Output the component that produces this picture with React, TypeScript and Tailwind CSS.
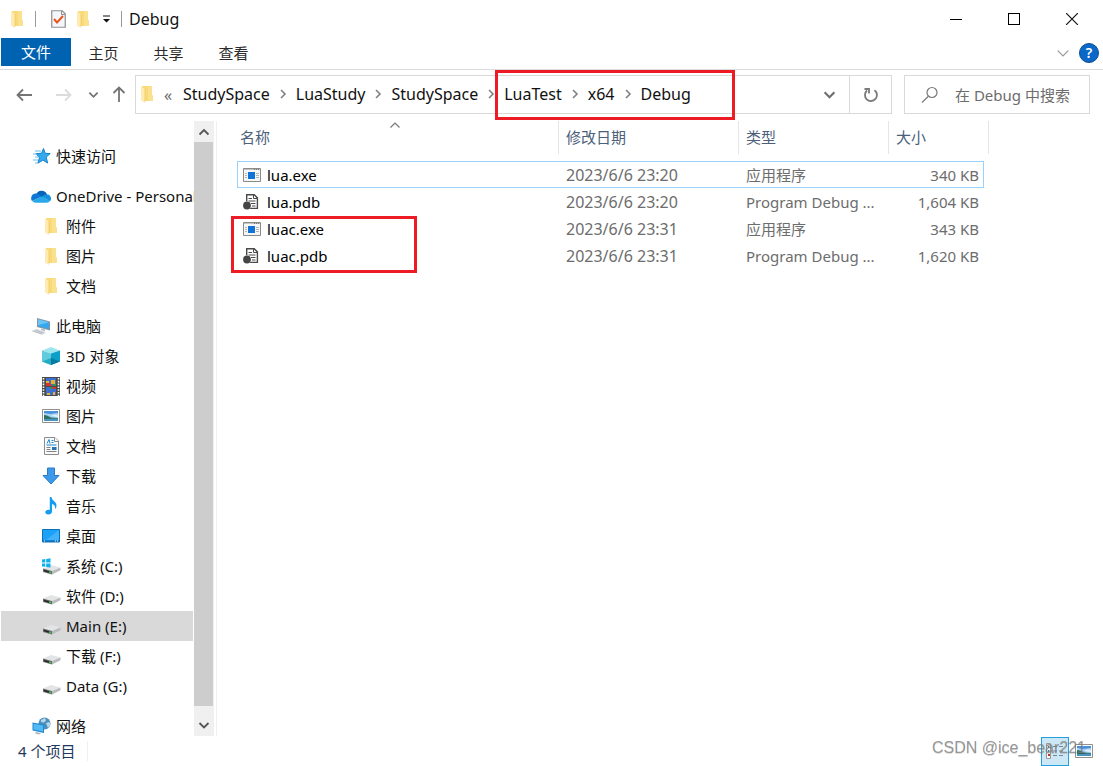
import { ReactNode } from 'react';

type NavItem = { label: string; icon: ReactNode; active?: boolean };

type FileRow = { name: string; kind: 'exe' | 'pdb'; date: string; type: string; size: string; focused?: boolean };

function FolderIcon() {
  return (
    <svg className="w-[13px] h-[17px] shrink-0" viewBox="0 0 13 17">
      <path d="M1 0h10v9.500h1V15H3z" fill="#f9d978" />
      <path d="M7 0h4v9.500h1V15H7z" fill="#fbe08e" />
      <path d="M0 .5l4 2.500v14L0 14.500z" fill="#fdebb2" />
      <path d="M4 3v12.500" stroke="#efc866" strokeWidth=".8" />
    </svg>
  );
}

function CheckDocIcon() {
  return (
    <svg className="w-[15px] h-[18px] shrink-0" viewBox="0 0 15 18">
      <path d="M.75.75h10.5l3 3v13.5H.75z" fill="#f4f6fa" stroke="#8e8e8e" strokeWidth="1.200" />
      <path d="M10.5 1v3.5H14" fill="none" stroke="#8e8e8e" />
      <path d="M3 9l3 3.500 6-6.500" fill="none" stroke="#e8541c" strokeWidth="2" />
    </svg>
  );
}

function StarIcon() {
  return (
    <svg className="w-[19px] h-[18px]" viewBox="0 0 19 18">
      <path d="M11.500 1.500l1.700 4.800 5 .3-4 3.500 1.400 5.900-4.700-2.900-4.900 3 1.500-5.700L4 6.600l5.500-.3z" fill="#35a9ee" stroke="#1681c9" />
      <path d="M3 4h6M1 7h4M3 10h4M1 13h5M3 16h3" stroke="#65bdf2" />
    </svg>
  );
}

function CloudIcon() {
  return (
    <svg className="w-5 h-[14px]" viewBox="0 0 20 14">
      <path d="M5 6a5.800 5.800 0 0 1 11-.5l-5 4z" fill="#0364b8" />
      <path d="M4.500 4.500A4.800 4.800 0 0 0 1 12l10-4.500-3.500-2.300a5 5 0 0 0-3-.7z" fill="#0f78d4" />
      <path d="M15.500 5.200a4.300 4.300 0 0 1 3.500 7L10.500 7.600l2.500-1.700z" fill="#1490df" />
      <path d="M1.200 12.100l9.500-4.700 8.300 4.700a4 4 0 0 1-3.300 1.700H4.600a4.500 4.500 0 0 1-3.400-1.700z" fill="#28a8ea" />
    </svg>
  );
}

function PcIcon() {
  return (
    <svg className="w-5 h-[18px]" viewBox="0 0 20 18">
      <path d="M6 1l13 3.500v9L6 10z" fill="#8a949c" />
      <path d="M7 2.300l11 3v7L7 9z" fill="#35a7ef" />
      <path d="M7 2.300l11 3-11 3z" fill="#6bc4f7" />
      <path d="M10 11.500l4 1v2l-4-1.500z" fill="#b4bcc2" />
      <path d="M0 14l6-2 9 3.500-4 2.200z" fill="#d5d8dc" />
      <path d="M2 14.200l9 2.700M4.500 13l8 2.900" stroke="#a5abb0" strokeWidth=".6" />
    </svg>
  );
}

function CubeIcon() {
  return (
    <svg className="w-[18px] h-[18px]" viewBox="0 0 18 18">
      <path d="M9 0l9 3.500-9 3-9-3z" fill="#9ee6ef" />
      <path d="M0 3.500l9 3V18l-9-3.500z" fill="#61cbdc" />
      <path d="M18 3.500l-9 3V18l9-3.500z" fill="#0c9fc8" />
      <path d="M0 14.500L9 11v7z" fill="#22adc5" />
      <path d="M18 14.500L9 11v7z" fill="#067a9f" />
    </svg>
  );
}

function FilmIcon() {
  return (
    <svg className="w-[18px] h-[19px]" viewBox="0 0 18 19">
      <path d="M0 0h18v19H0z" fill="#4a4a4a" />
      <path d="M1.500 1v18M16.500 1v18" stroke="#fff" strokeWidth="1.600" strokeDasharray="1.600 1.200" />
      <path d="M4 1h10v8H4zM4 10h10v8H4z" fill="#3c6fd0" />
      <path d="M4 6h4l2 3H4zM10 10h4v2h-3z" fill="#d8322b" />
      <path d="M9 3h4v4H9zM4 4h3v2H4zM5 16h3v2H5zM11 15h2v3h-2z" fill="#e8b425" />
      <path d="M11 7h3v2h-3zM8 10h2v2H8z" fill="#389b44" />
    </svg>
  );
}

function PictureIcon() {
  return (
    <svg className="w-[18px] h-[14px]" viewBox="0 0 18 14">
      <path d="M.5.5h17v13H.5z" fill="#fff" stroke="#909090" />
      <path d="M2 2h14v10H2z" fill="#a9d3f4" />
      <path d="M2 2h14v2L8 5 2 4z" fill="#4a91dd" />
      <path d="M2 6l3 .5L9 8.500l7 .5v1H2z" fill="#2f6f60" />
      <path d="M2 10l14-.5V12H2z" fill="#4a93bd" />
      <path d="M9 7l4-1.500 3 1v1.500z" fill="#e4f2fb" />
    </svg>
  );
}

function DocIcon() {
  return (
    <svg className="w-[15px] h-[18px]" viewBox="0 0 15 18">
      <path d="M.5.5h10.500l3.500 3.500v13.500H.5z" fill="#fafafa" stroke="#8c8c8c" />
      <path d="M10.500.5V4.500h4" fill="#fff" stroke="#8c8c8c" />
      <path d="M3 6.500l2-4 1 4M7.500 3.500h2M7.500 5.500h2M2.500 8h10" fill="none" stroke="#1d8ad6" />
      <path d="M2.500 10.500h4M2.500 12.500h4M2.500 14.500h10" stroke="#858585" />
      <path d="M8 10h4.500v3H8z" fill="#2373b8" />
    </svg>
  );
}

function DownIcon() {
  return (
    <svg className="w-[18px] h-[18px]" viewBox="0 0 18 18">
      <path d="M5.500 1h7v7.500H17L9 17 1 8.500h4.500z" fill="#3d9aea" stroke="#2a7bc8" />
    </svg>
  );
}

function MusicIcon() {
  return (
    <svg className="w-[18px] h-[18px]" viewBox="0 0 18 18">
      <path d="M9.500 0c.5 4 5 4.500 5 8.500 0 1.800-.8 3-1.500 3.500.5-3-.8-4.500-3-5v7.500c0 2-1.500 3-3.700 3-2 0-3-1-3-2.200 0-1.800 2-2.800 4.500-2.300V0z" fill="#129cf2" />
    </svg>
  );
}

function DesktopIcon() {
  return (
    <svg className="w-[18px] h-[14px]" viewBox="0 0 18 14">
      <path d="M.5.5h17v12.500H.5z" fill="#1ba1f9" stroke="#0c6fb8" />
      <path d="M17 1v10H4z" fill="#3fb2fb" />
      <path d="M1 12h16" stroke="#0f5ea0" />
      <path d="M2 12h1M13 12h1M15 12h1" stroke="#fff" />
    </svg>
  );
}

function DriveIcon({ windows }: { windows?: boolean }) {
  return (
    <svg className="w-[19px] h-[18px]" viewBox="0 0 19 18">
      <path d="M1 11.500L9 8l9.500 2.500L10 14z" fill="#e3e4e5" />
      <path d="M18.500 10.500v2.800L10 17.500V14z" fill="#b9bbbd" />
      <path d="M1 11.500l9 2.500v3.500L1 15z" fill="#6a6d6f" />
      <path d="M2 12.800l5 1.400v1.500l-5-1.400z" fill="#242628" />
      <path d="M7.300 14.500l1.700.5v1.500l-1.700-.5z" fill="#2fd43a" />
      {windows && <path d="M0 2.500l3.300-.5v3.500H0zM4.200 1.900L8.500 1.300v4.200H4.200zM0 6.400h3.300v3.400L0 9.400zM4.200 6.400h4.300v4.200l-4.300-.6z" fill="#12b0ec" />}
    </svg>
  );
}

function NetworkIcon() {
  return (
    <svg className="w-[19px] h-[18px]" viewBox="0 0 19 18">
      <circle cx="12.500" cy="6.500" r="6" fill="#4b8fbc" />
      <path d="M9 3l4-2 1 2.500-2 2-3-.5zM14 6l3.500-1 .8 3-2.300 3z" fill="#b7d9ea" />
      <path d="M.5 5.500l11.500 2v8.500L.5 13.500z" fill="#2787cf" />
      <path d="M1.500 6.800L11 8.400v6.200l-9.500-2z" fill="#4fbaf5" />
      <path d="M4 15l5 1.200L7 17.500l-4-1z" fill="#a9b4bb" />
    </svg>
  );
}

function ExeIcon() {
  return (
    <svg className="w-[18px] h-[14px] shrink-0" viewBox="0 0 18 14">
      <path d="M.5.5h17v13H.5z" fill="#f6f6f6" stroke="#8a8a8a" />
      <path d="M1 1.500h16" stroke="#c3c3c3" />
      <path d="M11 1.500h1M13 1.500h1M15 1.500h1" stroke="#777" />
      <path d="M5 4h7v7H5z" fill="#0f73d8" />
      <path d="M2 5.500h2M2 7.500h2M2 9.500h2M13 5.500h3M13 7.500h3M13 9.500h3" stroke="#b4b4b4" />
    </svg>
  );
}

function PdbIcon() {
  return (
    <svg className="w-[18px] h-[18px] shrink-0" viewBox="0 0 18 18">
      <path d="M3.700 1.700h7.500l3.200 3.200v10.500H3.700z" fill="#fff" stroke="#4a4a4a" strokeWidth="1.400" />
      <path d="M10.500 2v3.500H14" fill="none" stroke="#4a4a4a" />
      <path d="M5.500 5.500h3.500M5.500 8h7M8 10.500h4.500M9 13h3.500" stroke="#4a4a4a" />
      <circle cx="4" cy="12.500" r="4.300" fill="#fff" />
      <circle cx="4" cy="12.500" r="3.900" fill="#454545" />
    </svg>
  );
}

function Chevron({ className, d, size = 12, width = 1.5 }: { className?: string; d: string; size?: number; width?: number }) {
  return (
    <svg className={className} width={size} height={size} viewBox="0 0 12 12" fill="none" stroke="currentColor" strokeWidth={width}>
      <path d={d} />
    </svg>
  );
}

const DOWN = 'M1.500 4l4.500 4.500L10.500 4';
const UP = 'M1.500 8.500L6 4l4.500 4.500';
const RIGHT = 'M4 2L8 6l-4 4';

const CRUMBS = ['StudySpace', 'LuaStudy', 'StudySpace', 'LuaTest', 'x64', 'Debug'];

const GROUPS: { root: NavItem; children: NavItem[] }[] = [
  { root: { label: '快速访问', icon: <StarIcon /> }, children: [] },
  {
    root: { label: 'OneDrive - Personal', icon: <CloudIcon /> },
    children: [
      { label: '附件', icon: <FolderIcon /> },
      { label: '图片', icon: <FolderIcon /> },
      { label: '文档', icon: <FolderIcon /> },
    ],
  },
  {
    root: { label: '此电脑', icon: <PcIcon /> },
    children: [
      { label: '3D 对象', icon: <CubeIcon /> },
      { label: '视频', icon: <FilmIcon /> },
      { label: '图片', icon: <PictureIcon /> },
      { label: '文档', icon: <DocIcon /> },
      { label: '下载', icon: <DownIcon /> },
      { label: '音乐', icon: <MusicIcon /> },
      { label: '桌面', icon: <DesktopIcon /> },
      { label: '系统 (C:)', icon: <DriveIcon windows /> },
      { label: '软件 (D:)', icon: <DriveIcon /> },
      { label: 'Main (E:)', icon: <DriveIcon />, active: true },
      { label: '下载 (F:)', icon: <DriveIcon /> },
      { label: 'Data (G:)', icon: <DriveIcon /> },
    ],
  },
  { root: { label: '网络', icon: <NetworkIcon /> }, children: [] },
];

const FILES: FileRow[] = [
  { name: 'lua.exe', kind: 'exe', date: '2023/6/6 23:20', type: '应用程序', size: '340 KB', focused: true },
  { name: 'lua.pdb', kind: 'pdb', date: '2023/6/6 23:20', type: 'Program Debug ...', size: '1,604 KB' },
  { name: 'luac.exe', kind: 'exe', date: '2023/6/6 23:31', type: '应用程序', size: '343 KB' },
  { name: 'luac.pdb', kind: 'pdb', date: '2023/6/6 23:31', type: 'Program Debug ...', size: '1,620 KB' },
];

const COLUMNS = ['名称', '修改日期', '类型', '大小'];

function TitleBar() {
  return (
    <header className="flex h-[38px] shrink-0 items-center pl-[11px] pr-[2px]">
      <FolderIcon />
      <span className="ml-[11px] h-4 w-px bg-[#9a9a9a]" />
      <button aria-label="属性" className="ml-[15px]"><CheckDocIcon /></button>
      <button aria-label="新建文件夹" className="ml-[11px]"><FolderIcon /></button>
      <button aria-label="自定义快速访问工具栏" className="ml-3">
        <svg className="w-[9px] h-2" viewBox="0 0 9 8"><path d="M1 .5h7v1H1zM1 4h7L4.500 7.500z" fill="#111" /></svg>
      </button>
      <span className="ml-[10px] h-4 w-px bg-[#9a9a9a]" />
      <h1 className="ml-[7px] flex-1 text-base">Debug</h1>
      <button aria-label="最小化" className="flex h-full w-[58px] items-center justify-center"><span className="h-px w-3 bg-black" /></button>
      <button aria-label="最大化" className="flex h-full w-[58px] items-center justify-center"><span className="h-3 w-3 border border-black" /></button>
      <button aria-label="关闭" className="flex h-full w-[58px] items-center justify-center">
        <Chevron d="M0 0l12 12M12 0L0 12" width={1.2} />
      </button>
    </header>
  );
}

function Ribbon() {
  return (
    <nav className="flex h-8 shrink-0 border-b border-[#dadbdc] pl-px pr-1 text-[#2b2b2b]">
      <button className="h-7 w-[70px] bg-[#0063b1] text-white">文件</button>
      {['主页', '共享', '查看'].map((tab) => (
        <button key={tab} className="h-[30px] w-[65px]">{tab}</button>
      ))}
      <button aria-label="展开功能区" className="ml-auto mr-[9px] h-[30px] text-[#9b9b9b]"><Chevron d={DOWN} size={14} width={1.1} /></button>
      <button aria-label="帮助" className="mt-[5px] flex h-5 w-5 items-center justify-center rounded-full border border-[#0a4f94] bg-[#0b68c8] text-sm font-semibold text-white">?</button>
    </nav>
  );
}

function AddressBar() {
  return (
    <div className="flex h-[51px] shrink-0 items-start pr-[13px] pt-[5px]">
      <div className="flex h-[39px] w-[135px] shrink-0 items-center pl-4 text-[#747474]">
        <button aria-label="后退">
          <svg className="w-[17px] h-[14px]" viewBox="0 0 17 14" fill="none" stroke="currentColor" strokeWidth="1.800"><path d="M7 1.500L1.500 7 7 12.500M1.500 7H16" /></svg>
        </button>
        <button aria-label="前进" className="ml-[22px] text-[#dcdcdc]">
          <svg className="w-[17px] h-[14px]" viewBox="0 0 17 14" fill="none" stroke="currentColor" strokeWidth="1.800"><path d="M10 1.500L15.500 7 10 12.500M15.500 7H1" /></svg>
        </button>
        <button aria-label="最近位置" className="ml-4"><Chevron d={DOWN} size={11} width={2} /></button>
        <button aria-label="上移" className="ml-[13px]">
          <svg className="w-[14px] h-[17px]" viewBox="0 0 14 17" fill="none" stroke="currentColor" strokeWidth="1.800"><path d="M1.500 7L7 1.500 12.500 7M7 1.500V16" /></svg>
        </button>
      </div>
      <div className="relative flex h-[39px] min-w-0 flex-1 items-center border border-[#d9d9d9] pl-[5px]">
        <FolderIcon />
        <span className="ml-[10px] w-[19px] text-base leading-5 text-[#6a6a6a]">«</span>
        {CRUMBS.map((crumb, i) => (
          <div key={i} className="flex items-center pb-0.5">
            {i > 0 && <Chevron className="mx-[7px] text-[#808080]" d={RIGHT} width={1.600} />}
            <button className="text-base leading-5">{crumb}</button>
          </div>
        ))}
        <button aria-label="以前的位置" className="ml-auto mr-[13px] text-[#6f6f6f]"><Chevron d={DOWN} size={13} width={2} /></button>
        <button aria-label="刷新" className="flex h-full w-[42px] items-center justify-center border-l border-[#d9d9d9] text-[#7a7a7a]">
          <svg className="w-4 h-4" viewBox="0 0 16 16" fill="none" stroke="currentColor" strokeWidth="1.800"><path d="M11.500 3.200A6 6 0 1 1 4 3.500M1.500 2h4.500v4.500" /></svg>
        </button>
        <span className="absolute left-[359px] -top-[6px] h-[50px] w-[240px] border-3 border-[#ed1c24]" />
      </div>
      <label className="ml-3 flex h-[39px] w-[186px] shrink-0 items-center border border-[#d9d9d9] pl-4 text-[#6d6d6d]">
        <svg className="w-[18px] h-[18px] shrink-0" viewBox="0 0 18 18" fill="none" stroke="#7a7a7a" strokeWidth="1.200"><circle cx="11" cy="6.500" r="5" /><path d="M7.400 10.200L1 16.500" /></svg>
        <input type="search" aria-label="搜索" placeholder="在 Debug 中搜索" className="ml-4 w-full min-w-0 outline-none placeholder:text-[#6d6d6d]" />
      </label>
    </div>
  );
}

function NavRow({ item, child }: { item: NavItem; child?: boolean }) {
  return (
    <button className={`flex h-[30px] w-full items-center whitespace-nowrap text-left ${child ? 'pl-10' : 'pl-[30px]'} ${item.active ? 'bg-[#d9d9d9]' : ''}`}>
      <span className="flex w-[20px] shrink-0 justify-center">{item.icon}</span>
      <span className="ml-[5px]">{item.label}</span>
    </button>
  );
}

function Sidebar() {
  return (
    <aside className="flex w-[217px] shrink-0 border-r border-[#f0f0f0] pl-px">
      <div className="w-[193px] overflow-hidden pr-px pt-5">
        {GROUPS.map(({ root, children }) => (
          <div key={root.label} className="mb-[10px] last:mb-0">
            <NavRow item={root} />
            {children.map((item) => <NavRow key={item.label} item={item} child />)}
          </div>
        ))}
      </div>
      <div className="flex w-5 flex-col bg-[#f0f0f0] text-[#555]">
        <button aria-label="向上滚动" className="flex h-[21px] items-center justify-center"><Chevron d={UP} width={1.800} /></button>
        <div className="mr-px flex-1 bg-[#cdcdcd]" />
        <button aria-label="向下滚动" className="flex h-[30px] items-center justify-center pt-2"><Chevron d={DOWN} width={1.800} /></button>
      </div>
    </aside>
  );
}

function FileTable() {
  return (
    <main className="relative min-w-0 flex-1 pl-5">
      <Chevron className="absolute left-[172px] -top-[2px] text-[#777]" d={UP} width={1.200} />
      <table className="w-[752px] table-fixed border-separate border-spacing-0">
        <colgroup>
          <col className="w-[322px]" />
          <col className="w-[180px]" />
          <col className="w-[150px]" />
          <col className="w-[95px]" />
          <col className="w-[5px]" />
        </colgroup>
        <thead>
          <tr>
            {COLUMNS.map((col, i) => (
              <th key={col} colSpan={i === 3 ? 2 : 1} className="h-10 p-0 align-top text-left font-normal text-[#4c607a]">
                <div className={`flex h-[33px] items-center border-r border-[#e5e5e5] pb-0.5 ${i === 0 ? 'pl-[3px]' : 'pl-[7px]'}`}>{col}</div>
              </th>
            ))}
          </tr>
        </thead>
        <tbody>
          {FILES.map((f) => {
            const line = f.focused ? 'border-[#99d1ff]' : 'border-transparent';
            return (
              <tr key={f.name} className="h-[27px] text-[#6d6d6d]">
                <td className={`border-y border-l p-0 pl-[5px] ${line}`}>
                  <div className="flex h-[25px] items-center text-black">
                    <span className="w-6">{f.kind === 'exe' ? <ExeIcon /> : <PdbIcon />}</span>
                    {f.name}
                  </div>
                </td>
                <td className={`border-y p-0 pl-[7px] text-base leading-5 ${line}`}>{f.date}</td>
                <td className={`border-y p-0 pl-[7px] whitespace-nowrap ${line}`}>{f.type}</td>
                <td className={`border-y border-r p-0 pr-1 text-right whitespace-nowrap ${line}`}>{f.size}</td>
                <td className="p-0" />
              </tr>
            );
          })}
        </tbody>
      </table>
      <span className="absolute left-[14px] top-[95px] h-[57px] w-[186px] border-3 border-[#ed1c24]" />
    </main>
  );
}

function StatusBar() {
  return (
    <footer className="relative flex h-[30px] shrink-0 items-center pl-[18px] pr-[10px] text-[#1e395b]">
      <span className="border-r border-[#f0f0f0] pr-3">4 个项目</span>
      <button aria-label="详细信息" className="ml-auto flex h-[29px] w-7 items-center justify-center border border-[#26a0da] bg-[#cce8f6]">
        <svg className="w-[18px] h-4" viewBox="0 0 18 16">
          <path d="M.5.5h4v15h-4z" fill="#fff" stroke="#999" />
          <path d="M2 3h1.500v2H2zM2 7h1.500v2H2z" fill="#4a7a9c" />
          <path d="M2 11h2v2H2z" fill="#b5361c" />
          <path d="M7 3.500h4M13 3.500h4M7 8h4M13 8h4M7 12.500h4M13 12.500h4" stroke="#7a8791" />
        </svg>
      </button>
      <button aria-label="大缩略图" className="ml-[6px]"><PictureIcon /></button>
      <span className="pointer-events-none absolute right-[17px] top-[2px] font-['Liberation_Sans',sans-serif] text-base leading-5 text-[#808080]/80 text-shadow-2xs">CSDN @ice_bear221</span>
    </footer>
  );
}

export default function App() {
  return (
    <div className="flex h-screen flex-col bg-white font-['Noto_Sans','Noto_Sans_CJK_SC',sans-serif] text-[15px] leading-5 text-[#111]">
      <TitleBar />
      <Ribbon />
      <AddressBar />
      <div className="flex min-h-0 flex-1">
        <Sidebar />
        <FileTable />
      </div>
      <StatusBar />
    </div>
  );
}
